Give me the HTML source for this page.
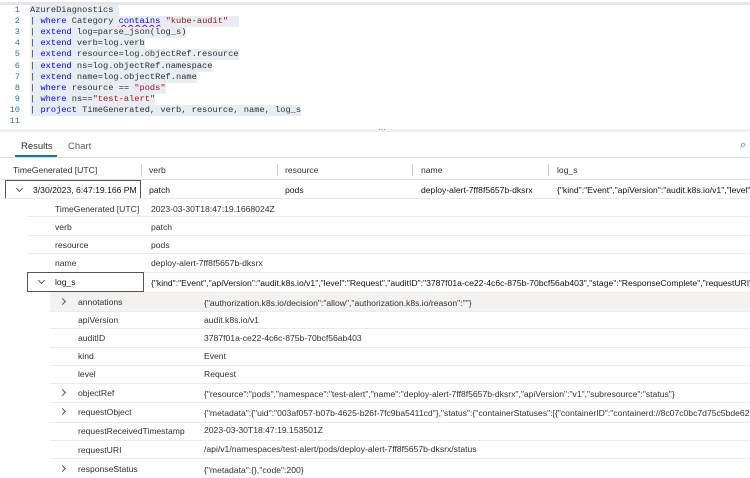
<!DOCTYPE html>
<html><head><meta charset="utf-8"><style>
*{margin:0;padding:0;box-sizing:border-box}
body{width:750px;height:478px;overflow:hidden;background:#fff;font-family:"Liberation Sans",sans-serif;color:#323130;position:relative}
.a{position:absolute;white-space:nowrap}
.code{font-family:"Liberation Mono",monospace;font-size:8.7px;line-height:11.1px}
.ln{color:#237893;width:20px;text-align:right;left:0}
.hl{background:#e8edf3}
.kw{color:#0000ff}.st{color:#a31515}
.t{font-size:8.6px;line-height:10px}
.hr{position:absolute;height:1px;background:#edebe9}
.chv{position:absolute;width:5px;height:5px;border-right:1px solid #555;border-bottom:1px solid #555}
</style></head><body>
<div class="a" style="left:0;top:2px;width:750px;height:3px;background:#e6e6e6"></div>
<div class="a code" style="top:5px;left:0">
<div class="a ln" style="top:0">1</div><div class="a ln" style="top:11.1px">2</div><div class="a ln" style="top:22.2px">3</div><div class="a ln" style="top:33.3px">4</div><div class="a ln" style="top:44.4px">5</div><div class="a ln" style="top:55.5px">6</div><div class="a ln" style="top:66.6px">7</div><div class="a ln" style="top:77.7px">8</div><div class="a ln" style="top:88.8px">9</div><div class="a ln" style="top:99.9px">10</div><div class="a ln" style="top:111px">11</div>
<div class="a hl" style="left:30px;top:0">AzureDiagnostics&nbsp;</div>
<div class="a hl" style="left:30px;top:11.1px">| <span class="kw">where</span> Category <span class="kw" style="text-decoration:underline wavy #a0a">contains</span> <span class="st">"kube-audit"</span>&nbsp;&nbsp;</div>
<div class="a hl" style="left:30px;top:22.2px">| <span class="kw">extend</span> log=parse_json(log_s)</div>
<div class="a hl" style="left:30px;top:33.3px">| <span class="kw">extend</span> verb=log.verb</div>
<div class="a hl" style="left:30px;top:44.4px">| <span class="kw">extend</span> resource=log.objectRef.resource</div>
<div class="a hl" style="left:30px;top:55.5px">| <span class="kw">extend</span> ns=log.objectRef.namespace</div>
<div class="a hl" style="left:30px;top:66.6px">| <span class="kw">extend</span> name=log.objectRef.name</div>
<div class="a hl" style="left:30px;top:77.7px">| <span class="kw">where</span> resource == <span class="st">"pods"</span></div>
<div class="a hl" style="left:30px;top:88.8px">| <span class="kw">where</span> ns==<span class="st">"test-alert"</span></div>
<div class="a hl" style="left:30px;top:99.9px">| <span class="kw">project</span> TimeGenerated, verb, resource, name, log_s</div>
</div>
<div class="a" style="left:0;top:129px;width:750px;height:3px;background:#f0f0f0"></div>
<div class="a" style="left:378px;top:125px;font-size:8px;color:#666">···</div>
<div class="a" style="left:21px;top:141px;font-size:9.5px">Results</div>
<div class="a" style="left:68px;top:141px;font-size:9.5px;color:#605e5c">Chart</div>
<div class="a" style="left:15px;top:155px;width:42px;height:2px;background:#0078d4"></div>
<div class="a" style="left:740px;top:139px;color:#0078d4;font-size:11px">⌕</div>
<div class="hr" style="left:0;top:157px;width:750px;background:#ddd"></div>
<div class="a t" style="left:13px;top:165px">TimeGenerated [UTC]</div>
<div class="a" style="left:141px;top:164px;width:1px;height:12px;background:#ccc"></div>
<div class="a t" style="left:149px;top:165px">verb</div>
<div class="a" style="left:277px;top:164px;width:1px;height:12px;background:#ccc"></div>
<div class="a t" style="left:285px;top:165px">resource</div>
<div class="a" style="left:412px;top:164px;width:1px;height:12px;background:#ccc"></div>
<div class="a t" style="left:421px;top:165px">name</div>
<div class="a" style="left:548px;top:164px;width:1px;height:12px;background:#ccc"></div>
<div class="a t" style="left:557px;top:165px">log_s</div>
<div class="hr" style="left:0;top:179px;width:750px;background:#ddd"></div>
<div class="a" style="left:5px;top:180px;width:136px;height:19px;border:1px solid #555"></div>
<div class="chv" style="left:17px;top:186px;transform:rotate(45deg)"></div>
<div class="a t" style="left:33px;top:185px;color:#111">3/30/2023, 6:47:19.166 PM</div>
<div class="a t" style="left:149px;top:185px;color:#111">patch</div>
<div class="a t" style="left:285px;top:185px;color:#111">pods</div>
<div class="a t" style="left:421px;top:185px;color:#111">deploy-alert-7ff8f5657b-dksrx</div>
<div class="a t" style="left:557px;top:185px;color:#111">{"kind":"Event","apiVersion":"audit.k8s.io/v1","level"...</div>
<div class="hr" style="left:0;top:198px;width:750px"></div>
<div class="a t" style="left:55px;top:204px">TimeGenerated [UTC]</div><div class="a t" style="left:151px;top:204px">2023-03-30T18:47:19.1668024Z</div>
<div class="hr" style="left:27px;top:216px;width:723px"></div>
<div class="a t" style="left:55px;top:222px">verb</div><div class="a t" style="left:151px;top:222px">patch</div>
<div class="hr" style="left:27px;top:235px;width:723px"></div>
<div class="a t" style="left:55px;top:240px">resource</div><div class="a t" style="left:151px;top:240px">pods</div>
<div class="hr" style="left:27px;top:253px;width:723px"></div>
<div class="a t" style="left:55px;top:258px">name</div><div class="a t" style="left:151px;top:258px">deploy-alert-7ff8f5657b-dksrx</div>
<div class="hr" style="left:27px;top:272px;width:723px"></div>
<div class="a" style="left:27px;top:272px;width:117px;height:20px;border:1px solid #555"></div>
<div class="chv" style="left:39px;top:278px;transform:rotate(45deg)"></div>
<div class="a t" style="left:55px;top:277px;color:#111">log_s</div>
<div class="a t" style="left:151px;top:278px;color:#111">{"kind":"Event","apiVersion":"audit.k8s.io/v1","level":"Request","auditID":"3787f01a-ce22-4c6c-875b-70bcf56ab403","stage":"ResponseComplete","requestURI":"/api</div>
<div class="hr" style="left:50px;top:292px;width:700px"></div>
<div class="a" style="left:50px;top:293px;width:700px;height:18px;background:#f3f2f1"></div>
<div class="chv" style="left:60px;top:299px;transform:rotate(-45deg)"></div><div class="a t" style="left:78px;top:297px">annotations</div><div class="a t" style="left:204px;top:298px">{"authorization.k8s.io/decision":"allow","authorization.k8s.io/reason":""}</div>
<div class="hr" style="left:50px;top:311px;width:700px"></div>
<div class="a t" style="left:78px;top:315px">apiVersion</div><div class="a t" style="left:204px;top:315px">audit.k8s.io/v1</div>
<div class="hr" style="left:50px;top:328px;width:700px"></div>
<div class="a t" style="left:78px;top:333px">auditID</div><div class="a t" style="left:204px;top:333px">3787f01a-ce22-4c6c-875b-70bcf56ab403</div>
<div class="hr" style="left:50px;top:347px;width:700px"></div>
<div class="a t" style="left:78px;top:351px">kind</div><div class="a t" style="left:204px;top:351px">Event</div>
<div class="hr" style="left:50px;top:365px;width:700px"></div>
<div class="a t" style="left:78px;top:369px">level</div><div class="a t" style="left:204px;top:369px">Request</div>
<div class="hr" style="left:50px;top:383px;width:700px"></div>
<div class="chv" style="left:60px;top:390px;transform:rotate(-45deg)"></div><div class="a t" style="left:78px;top:388px">objectRef</div><div class="a t" style="left:204px;top:389px">{"resource":"pods","namespace":"test-alert","name":"deploy-alert-7ff8f5657b-dksrx","apiVersion":"v1","subresource":"status"}</div>
<div class="hr" style="left:50px;top:402px;width:700px"></div>
<div class="chv" style="left:60px;top:409px;transform:rotate(-45deg)"></div><div class="a t" style="left:78px;top:407px">requestObject</div><div class="a t" style="left:204px;top:408px">{"metadata":{"uid":"003af057-b07b-4625-b26f-7fc9ba5411cd"},"status":{"containerStatuses":[{"containerID":"containerd://8c07c0bc7d75c5bde6221e7368</div>
<div class="hr" style="left:50px;top:422px;width:700px"></div>
<div class="a t" style="left:78px;top:426px">requestReceivedTimestamp</div><div class="a t" style="left:204px;top:425px">2023-03-30T18:47:19.153501Z</div>
<div class="hr" style="left:50px;top:440px;width:700px"></div>
<div class="a t" style="left:78px;top:445px">requestURI</div><div class="a t" style="left:204px;top:444px">/api/v1/namespaces/test-alert/pods/deploy-alert-7ff8f5657b-dksrx/status</div>
<div class="hr" style="left:50px;top:458px;width:700px"></div>
<div class="chv" style="left:60px;top:466px;transform:rotate(-45deg)"></div><div class="a t" style="left:78px;top:464px">responseStatus</div><div class="a t" style="left:204px;top:465px">{"metadata":{},"code":200}</div>
</body></html>
